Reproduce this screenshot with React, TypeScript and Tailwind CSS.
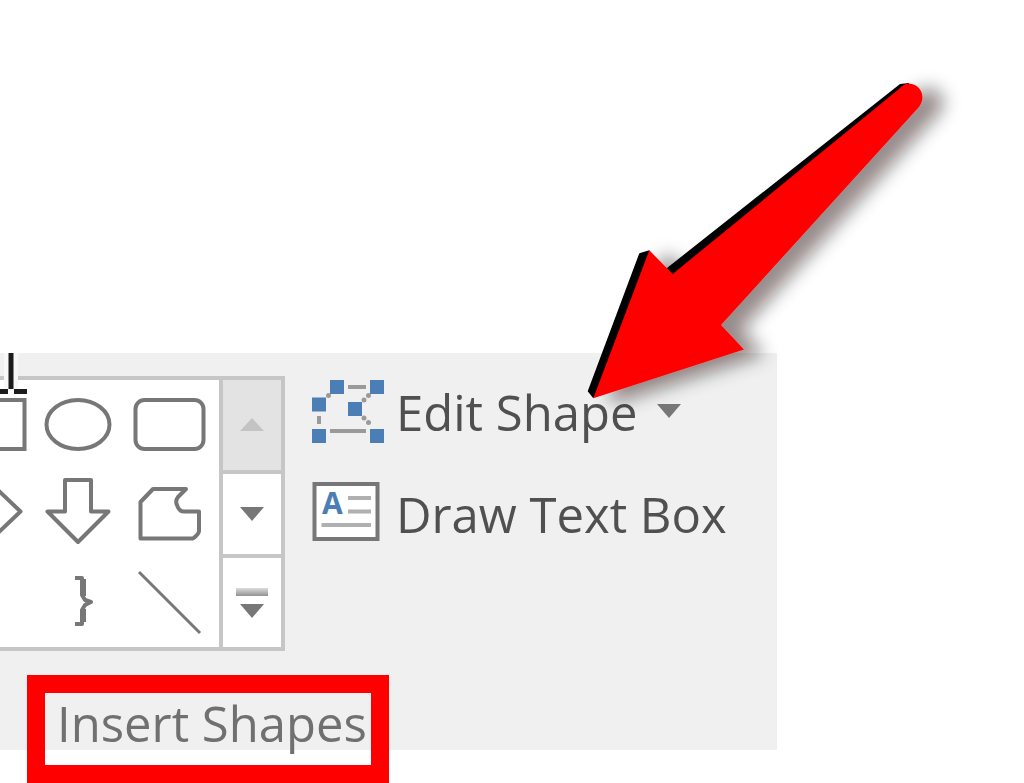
import type { ReactNode } from "react"

interface ShapeButtonProps {
  label: string
  children: ReactNode
}

// One cell of the shapes gallery, 89px high
function ShapeButton({ label, children }: ShapeButtonProps) {
  return (
    <button type="button" aria-label={label} className="h-[89px] w-full overflow-hidden">
      <svg className="block h-full w-full" fill="none" stroke="#777777" strokeWidth="4" strokeLinejoin="round">
        {children}
      </svg>
    </button>
  )
}

function ShapesGallery() {
  return (
    <div className="flex border-y-4 border-r-4 border-[#c6c6c6] bg-white">
      <div className="grid grid-cols-[32px_92px_90px] border-r-4 border-[#c6c6c6] pr-[5px]">
        <ShapeButton label="Rectangle">
          <rect x="-20" y="20" width="44.5" height="49" strokeLinejoin="miter" />
        </ShapeButton>
        <ShapeButton label="Oval">
          <ellipse cx="46" cy="44.5" rx="31.5" ry="24.5" />
        </ShapeButton>
        <ShapeButton label="Rounded rectangle">
          <rect x="11.5" y="20" width="68" height="49" rx="9" />
        </ShapeButton>
        <ShapeButton label="Diamond">
          <path d="M-22 42.5 -2 21 20.5 42.5 -2 64Z" />
        </ShapeButton>
        <ShapeButton label="Down arrow">
          <path d="M33 11H59V42.5H76.5L46 73 15.5 42.5H33Z" />
        </ShapeButton>
        <ShapeButton label="Freeform">
          <path d="M29 20H62L54 28Q51 32 53 36 55 42.5 60 42.5H75V62Q75 65 69 69.5H16.5V33Z" />
        </ShapeButton>
        <span />
        <ShapeButton label="Right brace">
          <path d="M43 20H50V37L53 42 59 44 53 47 50 52V66H43" strokeWidth="4" />
          <path d="M52 21V38M52 51V64" strokeWidth="4" />
        </ShapeButton>
        <ShapeButton label="Line">
          <path d="M15 14 76 75" strokeWidth="3" />
        </ShapeButton>
      </div>

      {/* Scroll column */}
      <div className="flex w-[58px] flex-col divide-y-4 divide-[#c6c6c6]">
        <button type="button" aria-label="Scroll up" className="flex h-[94px] items-center justify-center bg-[#e3e3e3]">
          <svg width="24" height="14" fill="#c3c3c3">
            <path d="M12 0 24 13H0Z" />
          </svg>
        </button>
        <button type="button" aria-label="Scroll down" className="flex h-[84px] items-center justify-center">
          <Caret />
        </button>
        <button type="button" aria-label="More shapes" className="flex h-[89px] flex-col items-center justify-center gap-2">
          <span className="h-2 w-8 bg-linear-to-b from-[#dddddd] to-[#929292]" />
          <Caret />
        </button>
      </div>
    </div>
  )
}

function Caret() {
  return (
    <svg width="24" height="14" fill="#777777">
      <path d="M0 0H24L12 14Z" />
    </svg>
  )
}

function EditShapeIcon() {
  return (
    <svg width="72" height="64" className="shrink-0">
      <g stroke="#9a9a9a" strokeWidth="4">
        <path d="M36 8H54M18 52H54M7 37V45" />
      </g>
      <g fill="#9a9a9a">
        <circle cx="16.500" cy="16.500" r="2.500" />
        <circle cx="56.500" cy="16.500" r="2.500" />
        <circle cx="52" cy="21" r="2.500" />
        <circle cx="52" cy="39" r="2.500" />
        <circle cx="56.500" cy="43.500" r="2.500" />
      </g>
      <g fill="#4a7eb5">
        <rect x="18" y="1" width="14" height="14" />
        <rect x="58" y="1" width="14" height="14" />
        <rect x="0" y="18.500" width="14" height="14" />
        <rect x="36" y="23" width="14" height="14" />
        <rect x="0" y="50" width="14" height="14" />
        <rect x="58" y="50" width="14" height="14" />
      </g>
    </svg>
  )
}

function TextBoxIcon() {
  return (
    <svg width="72" height="64" className="shrink-0">
      <rect x="2.500" y="3" width="63" height="55" fill="#ffffff" stroke="#777777" strokeWidth="4" />
      <text x="10" y="33" fill="#4a7eb5" fontFamily="Open Sans, sans-serif" fontSize="30" fontWeight="700">
        A
      </text>
      <path d="M36 17H59M36 30.500H59M9.500 44H59" stroke="#b0b0b0" strokeWidth="4" />
    </svg>
  )
}

// Bottom end of the text cursor
function TextCursor() {
  return (
    <svg width="30" height="44" className="pointer-events-none absolute left-0 top-0">
      <path d="M11 0V38" stroke="#f8f8f8" strokeWidth="14" />
      <path d="M11 0V36M0 38.500H8M14 38.500H27" fill="none" stroke="#1c1c1c" strokeWidth="5" />
    </svg>
  )
}

function PointerArrow() {
  return (
    <svg width="430" height="380" viewBox="560 50 430 380" className="pointer-events-none absolute left-[560px] top-[50px]">
      <defs>
        <filter id="arrowShadow" x="-20%" y="-20%" width="140%" height="140%">
          <feDropShadow dx="21" dy="5" stdDeviation="9" floodColor="#1c0606" floodOpacity="0.45" />
        </filter>
      </defs>
      <g filter="url(#arrowShadow)">
        <path d="M587.700 391.300 639.300 253.300 649.300 250.300 660 275 667 268 900 84 909 83V100L672 280 593.300 398.300Z" fill="#000000" />
        <path d="M593.300 398.300 649.300 250.300 672.700 274 899 89Q904 83.500 909 83.500C920 84 927 96 919 107L721 325 744 349.500Z" fill="#ff0000" />
      </g>
    </svg>
  )
}

export default function App() {
  return (
    <main className="relative min-h-screen overflow-hidden bg-white pt-[353px] font-['Open_Sans',sans-serif] text-[49px] text-[#505050]">
      <section className="relative w-fit bg-[#f0f0f0] pr-[50px]">
        <div className="flex items-start">
          <div className="pt-[23px]">
            <ShapesGallery />
          </div>
          <div className="flex flex-col items-start pl-[27px] pt-[7px]">
            <button type="button" className="flex h-[102px] items-center gap-3 whitespace-nowrap">
              <EditShapeIcon />
              <span className="pr-2 pt-1">Edit Shape</span>
              <Caret />
            </button>
            <button type="button" className="flex h-[102px] items-center gap-3 whitespace-nowrap">
              <TextBoxIcon />
              <span className="pt-1">Draw Text Box</span>
            </button>
          </div>
        </div>

        <div className="relative ml-[57px] mt-[45px] w-fit text-[#707070]">
          <h2 className="whitespace-nowrap leading-[54px]">Insert Shapes</h2>
          <div className="absolute -left-[30px] -top-[21px] h-[108px] w-[362px] border-[18px] border-[#ff0000]" />
        </div>
        <TextCursor />
      </section>
      <PointerArrow />
    </main>
  )
}
